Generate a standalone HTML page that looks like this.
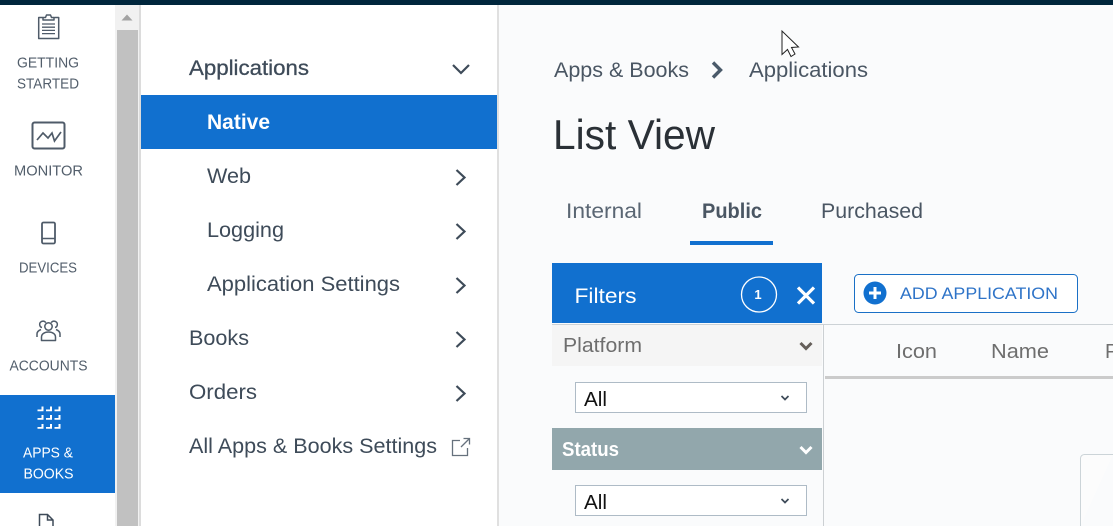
<!DOCTYPE html>
<html lang="en"><head><meta charset="utf-8"><title>List View</title>
<style>
html,body{margin:0;padding:0;width:1113px;height:526px;overflow:hidden;background:#fafbfc}
svg{display:block}
text{font-family:"Liberation Sans",sans-serif;font-size:20px;fill:#4a5663}
.nav{font-size:15px;fill:#525e6b}
.m{font-size:21px;fill:#3e4b59}
</style></head><body>
<svg width="1113" height="526" viewBox="0 0 1113 526" xmlns="http://www.w3.org/2000/svg">
<rect width="1113" height="526" fill="#fafbfc"/>
<!-- left nav -->
<rect x="0" y="5" width="115" height="521" fill="#fff"/>
<rect x="115" y="5" width="25" height="521" fill="#f1f1f1"/>
<rect x="117" y="30" width="21" height="496" fill="#c1c1c1"/>
<rect x="139" y="5" width="2" height="521" fill="#dcdcdc"/>
<path d="M127 14.500l-5.500 6h11z" fill="#a3a3a3"/>
<!-- second panel -->
<rect x="141" y="5" width="356" height="521" fill="#fff"/>
<rect x="497" y="5" width="2" height="521" fill="#e0e0e0"/>
<rect x="141" y="95" width="356" height="54" fill="#1170cf"/>
<rect x="0" y="395" width="115" height="98" fill="#1170cf"/>
<rect width="1113" height="5" fill="#00263c"/>

<!-- nav icons -->
<g fill="none" stroke="#4f5b69" stroke-width="1.500">
<path d="M43 18h-4.300v21h20v-21h-4.300M43 20.500h11v-2.500h-2.500l-1-2.500h-4l-1 2.500H43z" stroke-linejoin="round" transform="translate(0 -.5)"/>
<path d="M42 24h13M42 27.200h13M42 30.400h13M42 33.600h13" stroke-width="1.300"/>
<rect x="32.500" y="122.500" width="32" height="26" rx="2" stroke-width="2"/>
<path d="M37 140l6-7 5 5 4-5 2.500 8 6.500-9" stroke-width="1.700"/>
<rect x="42" y="222.500" width="13" height="21" rx="1.500" stroke-width="1.800"/>
<path d="M42 238.500h13" stroke-width="1.500"/>
<circle cx="48.500" cy="326.500" r="3.700"/>
<path d="M41.500 340.500v-3.500c0-3 3-5 7-5s7 2 7 5v3.500z" stroke-linejoin="round"/>
<path d="M42 327.500c-2.500-.5-3.500-4.500-.5-6 2-.8 3.500 0 4.300 1.200M55 327.500c2.500-.5 3.500-4.500.5-6-2-.8-3.500 0-4.300 1.200M37 337v-3c0-2 1.500-3.500 4-4.500M60 337v-3c0-2-1.500-3.500-4-4.500"/>
<path d="M39.500 526v-11.500h8l5.500 5.500v6M47.500 514.500v5.500h5.500" stroke="#3f4b59"/>
</g>
<!-- apps grid -->
<g fill="#fff">
<path d="M37.500 409.500h4v-3h2v4.800H37.500z"/>
<path d="M37.500 409.500h4v-3h2v4.800H37.500z" transform="translate(8.500 0)"/>
<path d="M37.500 409.500h4v-3h2v4.800H37.500z" transform="translate(17 0)"/>
<path d="M37.500 409.500h4v-3h2v4.800H37.500z" transform="translate(0 8.500)"/>
<path d="M37.500 409.500h4v-3h2v4.800H37.500z" transform="translate(8.500 8.500)"/>
<path d="M37.500 409.500h4v-3h2v4.800H37.500z" transform="translate(17 8.500)"/>
<path d="M37.500 409.500h4v-3h2v4.800H37.500z" transform="translate(0 17.500)"/>
<path d="M37.500 409.500h4v-3h2v4.800H37.500z" transform="translate(8.500 17.500)"/>
<path d="M37.500 409.500h4v-3h2v4.800H37.500z" transform="translate(17 17.500)"/>
</g>

<!-- nav labels -->
<text class="nav" x="17" y="67.500" textLength="62" lengthAdjust="spacingAndGlyphs">GETTING</text>
<text class="nav" x="17" y="88.500" textLength="62" lengthAdjust="spacingAndGlyphs">STARTED</text>
<text class="nav" x="14" y="175.500" textLength="69" lengthAdjust="spacingAndGlyphs">MONITOR</text>
<text class="nav" x="19" y="272.500" textLength="58" lengthAdjust="spacingAndGlyphs">DEVICES</text>
<text class="nav" x="9.500" y="370.500" textLength="78" lengthAdjust="spacingAndGlyphs">ACCOUNTS</text>
<text class="nav" x="23" y="457.500" textLength="50" lengthAdjust="spacingAndGlyphs" style="fill:#fff">APPS &amp;</text>
<text class="nav" x="23.500" y="478.500" textLength="50" lengthAdjust="spacingAndGlyphs" style="fill:#fff">BOOKS</text>

<!-- menu -->
<text class="m" x="189" y="75" textLength="120" lengthAdjust="spacingAndGlyphs" style="stroke:#3e4b59;stroke-width:.3">Applications</text>
<text class="m" x="207" y="129" textLength="63" lengthAdjust="spacingAndGlyphs" style="fill:#fff;font-weight:700">Native</text>
<text class="m" x="207" y="183" textLength="44" lengthAdjust="spacingAndGlyphs">Web</text>
<text class="m" x="207" y="237" textLength="77" lengthAdjust="spacingAndGlyphs">Logging</text>
<text class="m" x="207" y="291" textLength="193" lengthAdjust="spacingAndGlyphs">Application Settings</text>
<text class="m" x="189" y="345" textLength="60" lengthAdjust="spacingAndGlyphs">Books</text>
<text class="m" x="189" y="399" textLength="68" lengthAdjust="spacingAndGlyphs">Orders</text>
<text class="m" x="189" y="453" textLength="248" lengthAdjust="spacingAndGlyphs">All Apps &amp; Books Settings</text>
<g fill="none" stroke="#3e4b59" stroke-width="2.200">
<path d="M453 65l8 8 8-8"/>
<path d="M456.500 170l8 7.500-8 7.500"/>
<path d="M456.500 224l8 7.500-8 7.500"/>
<path d="M456.500 278l8 7.500-8 7.500"/>
<path d="M456.500 332l8 7.500-8 7.500"/>
<path d="M456.500 386l8 7.500-8 7.500"/>
</g>
<path d="M460 440.500h-7.500v15h15v-7.500M461 447l8-8M463.500 438.500h6v6" fill="none" stroke="#66717d" stroke-width="1.300"/>

<!-- breadcrumb -->
<text x="554" y="77" textLength="135" lengthAdjust="spacingAndGlyphs" style="font-size:21px">Apps &amp; Books</text>
<path d="M713 62.500l7.500 7.500-7.500 7.500" fill="none" stroke="#4a5a6a" stroke-width="3.400"/>
<text x="749" y="77" textLength="119" lengthAdjust="spacingAndGlyphs" style="font-size:21px">Applications</text>
<text x="553" y="149" textLength="162" lengthAdjust="spacingAndGlyphs" style="font-size:42px;fill:#2a3036">List View</text>

<!-- cursor -->
<path d="M782 31v23.500l5.500-5 3.500 7 4-2.500-3.500-6.500 7-.5z" fill="#fff" stroke="#222" stroke-width="1"/>

<!-- tabs -->
<text x="566" y="218" textLength="76" lengthAdjust="spacingAndGlyphs" style="font-size:21px;fill:#5a6673">Internal</text>
<text x="702" y="218" textLength="60" lengthAdjust="spacingAndGlyphs" style="font-size:21px;font-weight:700;fill:#4a5663">Public</text>
<text x="821" y="218" textLength="102" lengthAdjust="spacingAndGlyphs" style="font-size:21px">Purchased</text>
<rect x="690" y="241" width="83" height="4" fill="#1170cf"/>

<!-- table rules -->
<rect x="552" y="324" width="561" height="1" fill="#ccd2d6"/>
<rect x="823" y="325" width="1" height="201" fill="#ccd0d3"/>
<rect x="825" y="376" width="288" height="3" fill="#cbcbcb"/>

<!-- filters -->
<rect x="552" y="263" width="270" height="60" fill="#1170cf"/>
<text x="574.500" y="303" textLength="62" lengthAdjust="spacingAndGlyphs" style="font-size:21px;fill:#fff">Filters</text>
<circle cx="759" cy="294.500" r="17.500" fill="none" stroke="#fff" stroke-width="1.300"/>
<text x="758" y="299" text-anchor="middle" style="font-size:13px;font-weight:700;fill:#fff">1</text>
<path d="M798 287.500l16 16M814 287.500l-16 16" stroke="#fff" stroke-width="3.200" fill="none"/>

<rect x="552" y="325" width="270" height="41" fill="#f5f5f5"/>
<text x="563" y="352" textLength="79" lengthAdjust="spacingAndGlyphs" style="font-size:20px;fill:#6e6e6e">Platform</text>
<path d="M800.500 343l5.500 5.500 5.500-5.500" fill="none" stroke="#655f5a" stroke-width="3"/>
<rect x="575.500" y="382.500" width="231" height="30" fill="#fff" stroke="#aebbc6"/>
<text x="584" y="406" textLength="23" lengthAdjust="spacingAndGlyphs" style="font-size:20px;fill:#111">All</text>
<path d="M781.500 396l3.500 3.500 3.500-3.500" fill="none" stroke="#3e4b59" stroke-width="1.700"/>

<rect x="552" y="428" width="270" height="42" fill="#92a7ac"/>
<text x="562" y="456" textLength="57" lengthAdjust="spacingAndGlyphs" style="font-size:20px;font-weight:700;fill:#fff">Status</text>
<path d="M800.500 447l5.500 5.500 5.500-5.500" fill="none" stroke="#fff" stroke-width="3"/>
<rect x="575.500" y="485.500" width="231" height="30" fill="#fff" stroke="#aebbc6"/>
<text x="584" y="509" textLength="23" lengthAdjust="spacingAndGlyphs" style="font-size:20px;fill:#111">All</text>
<path d="M781.500 499l3.500 3.500 3.500-3.500" fill="none" stroke="#3e4b59" stroke-width="1.700"/>

<!-- add button -->
<rect x="854.500" y="274.500" width="223" height="38" rx="4" fill="#fff" stroke="#1a70c6"/>
<circle cx="875" cy="293" r="11.500" fill="#1170cf"/>
<path d="M875 287v12M869 293h12" stroke="#fff" stroke-width="3"/>
<text x="900" y="299" textLength="158" lengthAdjust="spacingAndGlyphs" style="font-size:17px;fill:#2f74c8">ADD APPLICATION</text>

<!-- headers -->
<text x="896" y="358" textLength="41" lengthAdjust="spacingAndGlyphs" style="font-size:20px;fill:#6e6e6e">Icon</text>
<text x="991" y="358" textLength="58" lengthAdjust="spacingAndGlyphs" style="font-size:20px;fill:#6e6e6e">Name</text>
<text x="1105" y="358" style="font-size:20px;fill:#6e6e6e">P</text>

<!-- card -->
<path d="M1113 454.500h-28a4 4 0 0 0-4.500 4.500v67" fill="#fcfcfc" stroke="#ccd4d8"/>
</svg>
</body></html>
